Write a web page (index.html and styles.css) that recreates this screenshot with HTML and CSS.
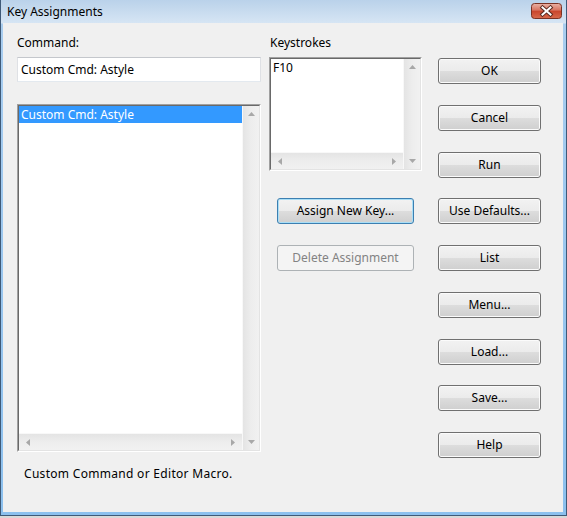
FILE: index.html
```html
<!DOCTYPE html>
<html>
<head>
<meta charset="utf-8">
<link rel="stylesheet" href="styles.css">
</head>
<body>
<div class="window">
  <div class="titlebar">
    <span class="title">Key Assignments</span>
    <div class="close">
      <svg width="31" height="16" viewBox="0 0 31 16">
        <defs>
          <linearGradient id="cg" x1="0" y1="0" x2="0" y2="1">
            <stop offset="0" stop-color="#eab3a6"/>
            <stop offset="0.45" stop-color="#d8735f"/>
            <stop offset="0.5" stop-color="#c9452c"/>
            <stop offset="1" stop-color="#d86a4c"/>
          </linearGradient>
        </defs>
        <rect x="0.5" y="0.5" width="30" height="15" rx="3" fill="url(#cg)" stroke="#7a3224"/>
        <path d="M11.5 4.5 L19.5 11.5 M19.5 4.5 L11.5 11.5" stroke="#5a2a20" stroke-width="4" stroke-linecap="square"/>
        <path d="M11.5 4.5 L19.5 11.5 M19.5 4.5 L11.5 11.5" stroke="#ffffff" stroke-width="2" stroke-linecap="square"/>
      </svg>
    </div>
  </div>
  <div class="client">
    <div class="col col-cmd">
      <div class="label">Command:</div>
      <div class="textbox">Custom Cmd: Astyle</div>
      <div class="sunken big">
        <div class="lb">
          <div class="lb-area">
            <div class="item selected">Custom Cmd: Astyle</div>
          </div>
          <div class="vscroll">
            <svg class="arr" width="7" height="4" viewBox="0 0 7 4"><path d="M0 4 L3.5 0 L7 4Z" fill="#a8a8a8"/></svg>
            <svg class="arr" width="7" height="4" viewBox="0 0 7 4"><path d="M0 0 L3.5 4 L7 0Z" fill="#a8a8a8"/></svg>
          </div>
          <div class="hscroll">
            <svg class="arr" width="4" height="7" viewBox="0 0 4 7"><path d="M4 0 L0 3.5 L4 7Z" fill="#a8a8a8"/></svg>
            <svg class="arr" width="4" height="7" viewBox="0 0 4 7"><path d="M0 0 L4 3.5 L0 7Z" fill="#a8a8a8"/></svg>
          </div>
        </div>
      </div>
      <div class="status">Custom Command or Editor Macro.</div>
    </div>
    <div class="col col-keys">
      <div class="label keys-label">Keystrokes</div>
      <div class="sunken small">
        <div class="lb">
          <div class="lb-area">
            <div class="item">F10</div>
          </div>
          <div class="vscroll">
            <svg class="arr" width="7" height="4" viewBox="0 0 7 4"><path d="M0 4 L3.5 0 L7 4Z" fill="#a8a8a8"/></svg>
            <svg class="arr" width="7" height="4" viewBox="0 0 7 4"><path d="M0 0 L3.5 4 L7 0Z" fill="#a8a8a8"/></svg>
          </div>
          <div class="hscroll">
            <svg class="arr" width="4" height="7" viewBox="0 0 4 7"><path d="M4 0 L0 3.5 L4 7Z" fill="#a8a8a8"/></svg>
            <svg class="arr" width="4" height="7" viewBox="0 0 4 7"><path d="M0 0 L4 3.5 L0 7Z" fill="#a8a8a8"/></svg>
          </div>
        </div>
      </div>
      <div class="btn wide focused first">Assign New Key...</div>
      <div class="btn wide disabled second">Delete Assignment</div>
    </div>
    <div class="col col-btns">
      <div class="btn">OK</div>
      <div class="btn">Cancel</div>
      <div class="btn">Run</div>
      <div class="btn">Use Defaults...</div>
      <div class="btn">List</div>
      <div class="btn">Menu...</div>
      <div class="btn">Load...</div>
      <div class="btn">Save...</div>
      <div class="btn">Help</div>
    </div>
  </div>
</div>
</body>
</html>
```
FILE: styles.css
```css
html, body {
  margin: 0;
  padding: 0;
}
body {
  background: #d9d9d9;
  font-family: "Noto Sans", "Open Sans", sans-serif;
  font-size: 12px;
  color: #000;
}
.window {
  width: 567px;
  height: 516px;
  box-sizing: border-box;
  border: 1px solid #3f5a78;
  border-top: none;
  padding: 0 3px 3px 2px;
  background: linear-gradient(#bad2ea, #d6e5f4 23px, #a9cdef 24px, #8cc0ee);
  display: flex;
  flex-direction: column;
}
.titlebar {
  height: 23px;
  flex: none;
  display: flex;
  align-items: flex-start;
  justify-content: space-between;
}
.title {
  padding-left: 4px;
  line-height: 23px;
  font-size: 12px;
}
.close {
  margin-top: 3px;
  margin-right: 1px;
  height: 16px;
}
.close svg {
  display: block;
}
.client {
  flex: 1;
  background: #f0f0f0;
  display: flex;
  padding: 11px 0 0 14px;
}
.col {
  display: flex;
  flex-direction: column;
}
.col-cmd {
  width: 244px;
}
.col-keys {
  width: 153px;
  margin-left: 8px;
}
.col-btns {
  width: 103px;
  margin-left: 16px;
  padding-top: 24px;
  gap: 20.75px;
}
.label {
  height: 16px;
  line-height: 17px;
  margin-bottom: 7px;
}
.keys-label {
  padding-left: 1px;
}
.textbox {
  height: 25px;
  box-sizing: border-box;
  background: #fff;
  border: 1px solid;
  border-color: #c4c7cc #dfe1e5 #e3e9ef #dfe1e5;
  padding-left: 3px;
  line-height: 23px;
}
.sunken {
  box-sizing: border-box;
  border: 1px solid;
  border-color: #a0a0a0 #ffffff #ffffff #a0a0a0;
}
.sunken.big {
  margin-top: 22px;
  height: 348px;
}
.sunken.small {
  height: 114px;
}
.lb {
  height: 100%;
  box-sizing: border-box;
  border: 1px solid;
  border-color: #696969 #e3e3e3 #e3e3e3 #696969;
  background: #fff;
  display: grid;
  grid-template-columns: 1fr 17px;
  grid-template-rows: 1fr 17px;
}
.lb-area {
  grid-column: 1;
  grid-row: 1;
  overflow: hidden;
}
.item {
  height: 17px;
  line-height: 17px;
  padding-left: 2px;
  white-space: nowrap;
}
.item.selected {
  background: #3399ff;
  color: #fff;
}
.vscroll {
  grid-column: 2;
  grid-row: 1 / 3;
  background: linear-gradient(90deg, #e4e4e4, #ededed 50%, #f1f1f1);
  border-left: 1px solid #f8f8f8;
  display: flex;
  flex-direction: column;
  justify-content: space-between;
  align-items: center;
  padding: 6px 0;
}
.hscroll {
  grid-column: 1;
  grid-row: 2;
  background: linear-gradient(#e4e4e4, #ededed 50%, #f1f1f1);
  border-top: 1px solid #f8f8f8;
  display: flex;
  justify-content: space-between;
  align-items: center;
  padding: 0 7px;
}
.arr {
  display: block;
}
.status {
  margin-top: 13px;
  padding-left: 7px;
  line-height: 17px;
  letter-spacing: 0.3px;
}
.btn {
  height: 26px;
  box-sizing: border-box;
  border: 1px solid #707070;
  border-radius: 3px;
  background: linear-gradient(#f2f2f2 0%, #ebebeb 50%, #dddddd 50%, #cfcfcf 100%);
  box-shadow: inset 0 0 0 1px #fbfbfb;
  display: flex;
  align-items: center;
  justify-content: center;
  white-space: nowrap;
  padding-bottom: 1px;
}
.btn.wide {
  width: 137px;
  margin-left: 8px;
}
.btn.first {
  margin-top: 27px;
}
.btn.second {
  margin-top: 21px;
}
.btn.focused {
  border-color: #3c7fb1;
  box-shadow: inset 0 0 0 1px #a9def6;
}
.btn.disabled {
  border-color: #adb2b5;
  background: #f4f4f4;
  box-shadow: none;
  color: #838383;
}
```
